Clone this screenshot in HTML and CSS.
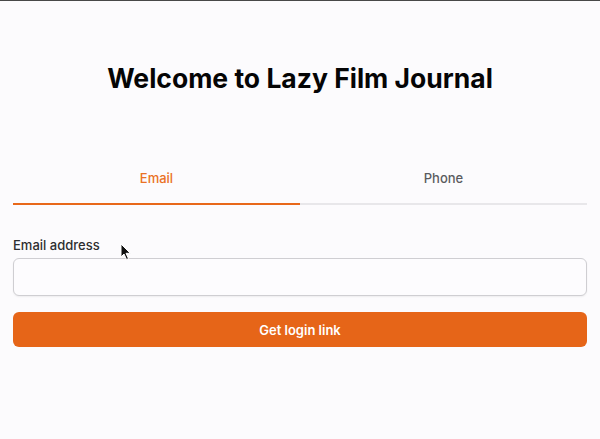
FILE: index.html
```html
<!DOCTYPE html>
<html lang="en">
<head>
    <meta charset="UTF-8">
    <meta name="viewport" content="width=device-width, initial-scale=1.0">
    <title>Lazy Film Journal - Sign in</title>
    <link rel="stylesheet" href="styles.css">
</head>
<body>
    <div class="container">
        <h1>Welcome to Lazy Film Journal</h1>
        <div class="tabs">
            <button class="tab active" type="button">Email</button>
            <button class="tab" type="button">Phone</button>
        </div>
        <form action="/login" method="POST">
            <label for="email">Email address</label>
            <input type="email" id="email" name="email" required>
            <button class="submit" type="submit">Get login link</button>
        </form>
    </div>
    <svg class="cursor" width="12" height="18" viewBox="0 0 12 18">
        <path d="M1 1 L1 14 L4 11 L6.5 16.5 L8.5 15.6 L6 10.3 L10.3 10.3 Z" fill="#111" stroke="#fff" stroke-width="1"/>
    </svg>
</body>
</html>
```

FILE: styles.css
```css
body {
    font-family: Inter, "Noto Sans", sans-serif;
    margin: 0;
    padding: 0;
    background-color: #fcfbfd;
    border-top: 1px solid #484848;
    min-height: 438px;
    position: relative;
}
.container {
    padding: 0 13px;
}
h1 {
    margin: 61px 0 0;
    font-size: 26.5px;
    line-height: 32px;
    font-weight: 700;
    text-align: center;
    color: #050505;
}
.tabs {
    display: flex;
    margin-top: 59px;
    border-bottom: 2px solid #e8e7ea;
}
.tab {
    flex: 1;
    padding: 15px 0;
    margin-bottom: -2px;
    background: none;
    border: none;
    border-bottom: 2px solid transparent;
    font-family: inherit;
    font-size: 13px;
    line-height: 20px;
    font-weight: 500;
    color: #5b5b5f;
    cursor: pointer;
}
.tab.active {
    color: #ea7225;
    border-bottom-color: #e8681a;
}
form {
    display: flex;
    flex-direction: column;
    margin-top: 30px;
}
label {
    font-size: 13px;
    line-height: 20px;
    font-weight: 500;
    color: #2e2e30;
}
input {
    margin-top: 3px;
    height: 38px;
    box-sizing: border-box;
    padding: 0 12px;
    font-size: 14px;
    background: #fdfcfe;
    border: 1px solid #cfced2;
    border-radius: 6px;
    box-shadow: 0 1px 2px rgba(0, 0, 0, 0.06);
}
.submit {
    margin-top: 16px;
    height: 35px;
    font-family: inherit;
    font-size: 13px;
    font-weight: 600;
    background-color: #e66518;
    color: #fff;
    border: none;
    border-radius: 6px;
    cursor: pointer;
}
.cursor {
    position: absolute;
    left: 120px;
    top: 242px;
}
```
